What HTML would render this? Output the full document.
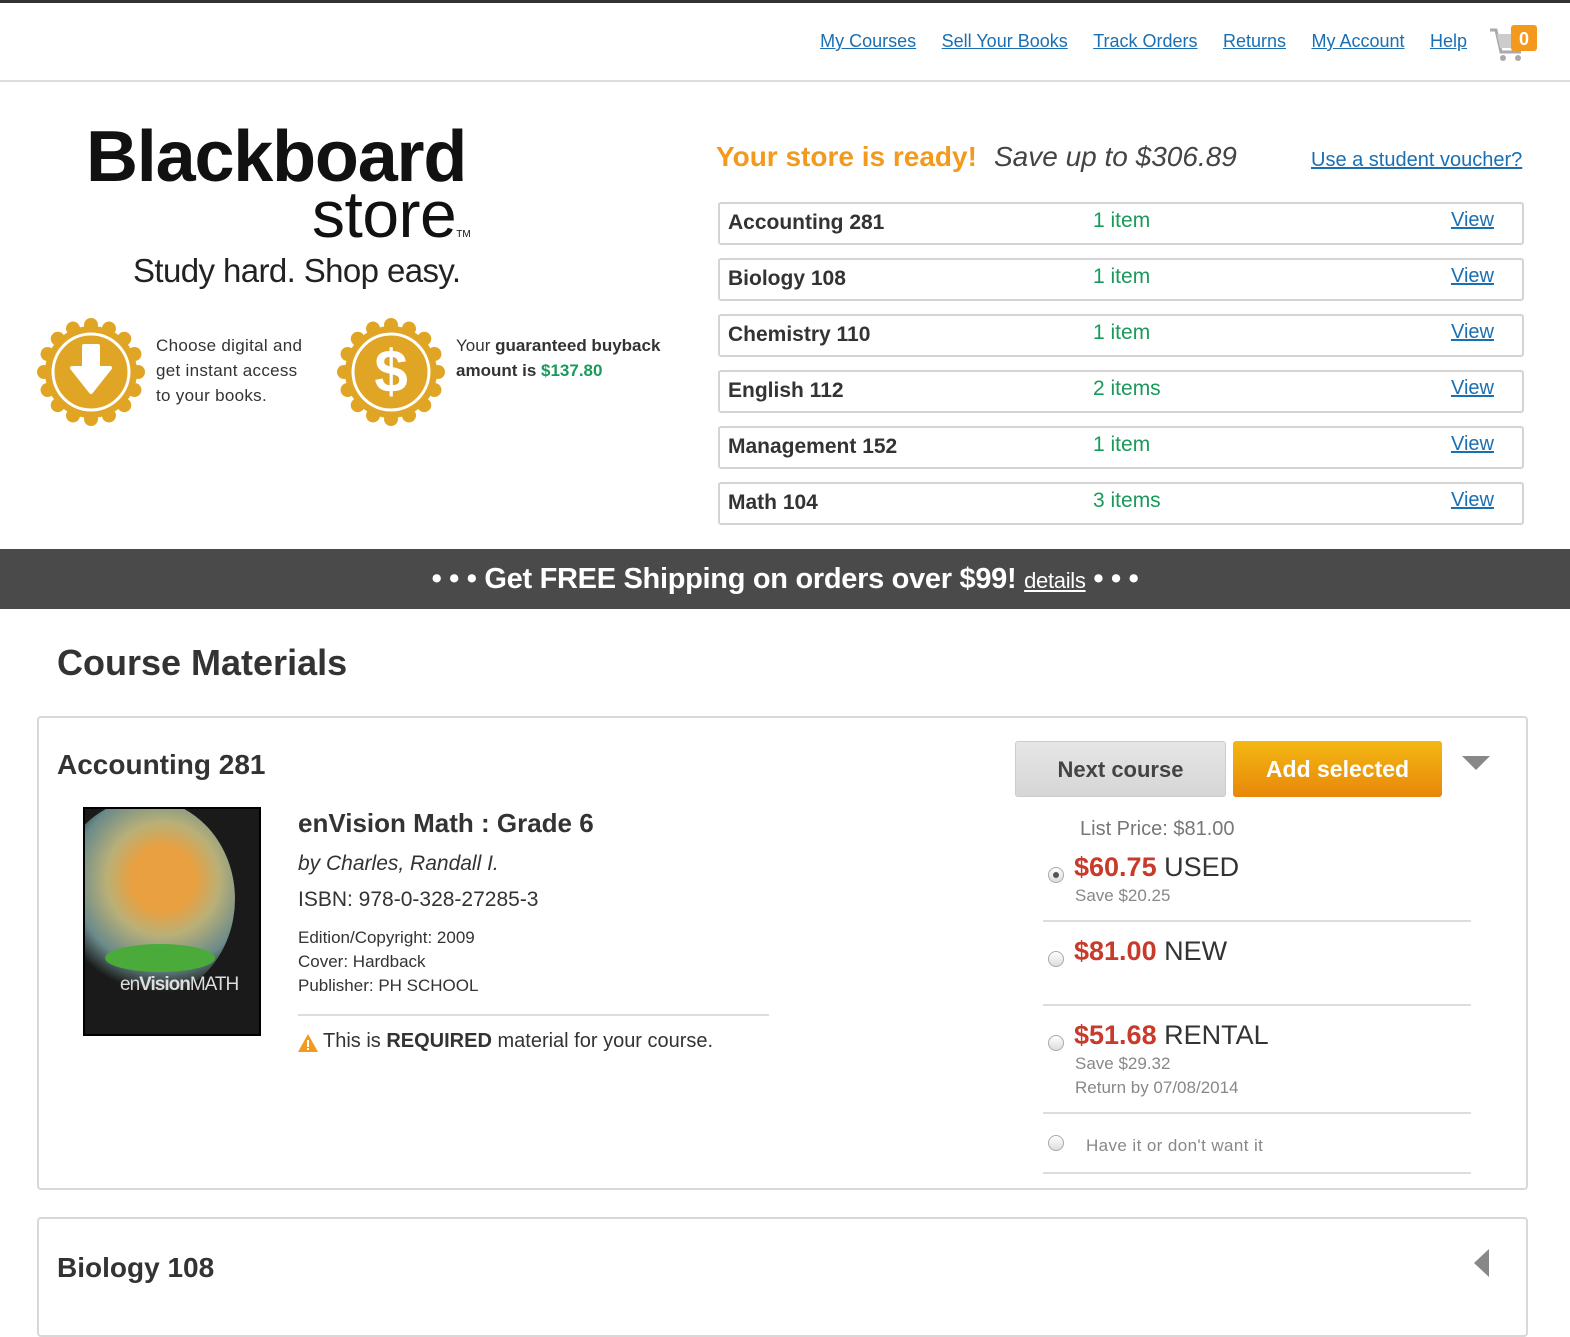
<!DOCTYPE html>
<html><head><meta charset="utf-8"><style>
*{margin:0;padding:0;box-sizing:border-box}
body{width:1570px;height:1304px;overflow:hidden;background:#fff;font-family:"Liberation Sans",Arial,sans-serif;color:#333;position:relative}
.a{position:absolute}
a{color:#1a6fb3;text-decoration:underline}
.nav a{font-size:18px;margin-left:21px}
.row{position:absolute;left:718px;width:806px;height:43px;border:2px solid #d4d4d4;border-radius:3px}
.row .n{position:absolute;left:8px;top:7px;font-size:21px;font-weight:bold;color:#333}
.row .c{position:absolute;left:373px;top:5px;font-size:21px;color:#1a9a5a}
.row a{position:absolute;left:731px;top:5px;font-size:20px}
.box{position:absolute;left:37px;width:1491px;border:2px solid #d8d8d8;border-radius:4px}
.hr{position:absolute;left:1043px;width:428px;height:2px;background:#ddd}
.rad{position:absolute;left:1048px;width:16px;height:16px;border-radius:50%;border:1px solid #aaa;background:linear-gradient(#fff,#ddd)}
.pr{position:absolute;left:1074px;font-size:27px;color:#333}
.pr b{color:#c83a2a}
.sv{position:absolute;left:1075px;font-size:17px;color:#888}
</style></head><body>
<div class="a" style="left:0;top:0;width:1570px;height:3px;background:#333"></div>
<div class="a" style="left:0;top:80px;width:1570px;height:2px;background:#ddd"></div>
<div class="a nav" style="right:103px;top:31px;white-space:nowrap"><a>My Courses</a> <a>Sell Your Books</a> <a>Track Orders</a> <a>Returns</a> <a>My Account</a> <a>Help</a></div>
<svg class="a" style="left:1488px;top:24px" width="52" height="40" viewBox="0 0 52 40"><path d="M2 6h6l5 22h20" fill="none" stroke="#aaa" stroke-width="3"/><path d="M9 10h28l-4 14H12z" fill="#ccc"/><circle cx="15" cy="34" r="3" fill="#aaa"/><circle cx="30" cy="34" r="3" fill="#aaa"/><rect x="23" y="1" width="26" height="26" rx="3" fill="#f39a1e"/><text x="36" y="21" font-family="Liberation Sans" font-weight="bold" font-size="18" fill="#fff" text-anchor="middle">0</text></svg>

<div class="a" style="left:86px;top:116px;font-size:72px;font-weight:bold;color:#111;letter-spacing:-1.2px">Blackboard</div>
<div class="a" style="left:312px;top:176px;font-size:66px;color:#111;letter-spacing:-0.5px">store<span style="font-size:10px;letter-spacing:0">TM</span></div>
<div class="a" style="left:133px;top:252px;font-size:33px;color:#222;letter-spacing:-0.6px">Study hard. Shop easy.</div>

<svg class="a" style="left:37px;top:318px" width="108" height="108" viewBox="-54 -54 108 108"><g fill="#e0a524"><circle r="46"/>
<g id="s"><circle cx="0" cy="-47" r="7"/><circle cx="0" cy="47" r="7"/><circle cx="-47" cy="0" r="7"/><circle cx="47" cy="0" r="7"/></g>
<use href="#s" transform="rotate(22.5)"/><use href="#s" transform="rotate(45)"/><use href="#s" transform="rotate(67.5)"/></g>
<circle r="38" fill="none" stroke="#fff" stroke-width="3"/><path d="M-7 -26h14v22h12l-19 24-19-24h12z" fill="#fff" stroke="#fff" stroke-width="4" stroke-linejoin="round"/></svg>
<div class="a" style="left:156px;top:333px;font-size:17px;line-height:25px;color:#333;letter-spacing:0.3px">Choose digital and<br>get instant access<br>to your books.</div>
<svg class="a" style="left:337px;top:318px" width="108" height="108" viewBox="-54 -54 108 108"><g fill="#e0a524"><circle r="46"/>
<g id="s2"><circle cx="0" cy="-47" r="7"/><circle cx="0" cy="47" r="7"/><circle cx="-47" cy="0" r="7"/><circle cx="47" cy="0" r="7"/></g>
<use href="#s2" transform="rotate(22.5)"/><use href="#s2" transform="rotate(45)"/><use href="#s2" transform="rotate(67.5)"/></g>
<circle r="38" fill="none" stroke="#fff" stroke-width="3"/><text x="0" y="20" text-anchor="middle" font-family="Liberation Sans" font-weight="bold" font-size="60" fill="#fff">$</text></svg>
<div class="a" style="left:456px;top:333px;font-size:17px;line-height:25px;color:#333">Your <b>guaranteed buyback</b><br><b>amount is <span style="color:#1a9a5a">$137.80</span></b></div>

<div class="a" style="left:716px;top:141px;font-size:28px;font-weight:bold;color:#f39a1e">Your store is ready!</div>
<div class="a" style="left:994px;top:141px;font-size:28px;font-style:italic;color:#444">Save up to $306.89</div>
<a class="a" style="left:1311px;top:149px;font-size:20px">Use a student voucher?</a>

<div class="row" style="top:202px"><span class="n">Accounting 281</span><span class="c">1 item</span><a>View</a></div>
<div class="row" style="top:258px"><span class="n">Biology 108</span><span class="c">1 item</span><a>View</a></div>
<div class="row" style="top:314px"><span class="n">Chemistry 110</span><span class="c">1 item</span><a>View</a></div>
<div class="row" style="top:370px"><span class="n">English 112</span><span class="c">2 items</span><a>View</a></div>
<div class="row" style="top:426px"><span class="n">Management 152</span><span class="c">1 item</span><a>View</a></div>
<div class="row" style="top:482px"><span class="n">Math 104</span><span class="c">3 items</span><a>View</a></div>

<div class="a" style="left:0;top:549px;width:1570px;height:60px;background:#4a4a4a;color:#fff;text-align:center;font-size:29px;font-weight:bold;line-height:60px;letter-spacing:-0.3px">• • • Get FREE Shipping on orders over $99! <span style="font-size:22px;text-decoration:underline;font-weight:normal">details</span> • • •</div>

<div class="a" style="left:57px;top:642px;font-size:36px;font-weight:bold;color:#333">Course Materials</div>

<div class="box" style="top:716px;height:474px"></div>
<div class="a" style="left:57px;top:749px;font-size:28px;font-weight:bold;color:#333">Accounting 281</div>
<div class="a" style="left:1015px;top:741px;width:211px;height:56px;background:linear-gradient(#e6e6e6,#d6d6d6);border:1px solid #ccc;border-radius:3px;font-size:22px;font-weight:bold;color:#444;text-align:center;line-height:56px">Next course</div>
<div class="a" style="left:1233px;top:741px;width:209px;height:56px;background:linear-gradient(#f3b812,#e8870a);border-radius:3px;font-size:23px;font-weight:bold;color:#fff;text-align:center;line-height:56px">Add selected</div>
<div class="a" style="left:1462px;top:756px;width:0;height:0;border-left:14px solid transparent;border-right:14px solid transparent;border-top:14px solid #888"></div>

<div class="a" style="left:83px;top:807px;width:178px;height:229px;background:#1a1a1a;border:2px solid #000;overflow:hidden">
<div class="a" style="left:-30px;top:-10px;width:180px;height:200px;border-radius:50%;background:radial-gradient(circle at 60% 40%,#e8a040 0 20%,#b9b078 35%,#6a8a8a 55%,transparent 70%)"></div>
<div class="a" style="left:20px;top:135px;width:110px;height:28px;border-radius:50%;background:#4aaa3a"></div>
<div class="a" style="left:35px;top:165px;font-size:19px;color:#ddd;letter-spacing:-1px">en<b>Vision</b>MATH</div></div>

<div class="a" style="left:298px;top:808px;font-size:26px;font-weight:bold;color:#333">enVision Math : Grade 6</div>
<div class="a" style="left:298px;top:852px;font-size:21px;font-style:italic;color:#333">by Charles, Randall I.</div>
<div class="a" style="left:298px;top:888px;font-size:21px;color:#333">ISBN: 978-0-328-27285-3</div>
<div class="a" style="left:298px;top:926px;font-size:17px;line-height:24px;color:#333">Edition/Copyright: 2009<br>Cover: Hardback<br>Publisher: PH SCHOOL</div>
<div class="a" style="left:298px;top:1014px;width:471px;height:2px;background:#ddd"></div>
<svg class="a" style="left:297px;top:1033px" width="22" height="20"><path d="M11 1L21 19H1z" fill="#f39a1e"/><rect x="10" y="7" width="2" height="7" fill="#fff"/><rect x="10" y="15" width="2" height="2" fill="#fff"/></svg>
<div class="a" style="left:323px;top:1030px;font-size:20px;color:#333">This is <b>REQUIRED</b> material for your course.</div>

<div class="a" style="left:1080px;top:818px;font-size:20px;color:#777">List Price: $81.00</div>
<div class="rad" style="top:867px"><div class="a" style="left:4px;top:4px;width:6px;height:6px;border-radius:50%;background:#555"></div></div>
<div class="pr" style="top:852px"><b>$60.75</b> USED</div>
<div class="sv" style="top:886px">Save $20.25</div>
<div class="hr" style="top:920px"></div>
<div class="rad" style="top:951px"></div>
<div class="pr" style="top:936px"><b>$81.00</b> NEW</div>
<div class="hr" style="top:1004px"></div>
<div class="rad" style="top:1035px"></div>
<div class="pr" style="top:1020px"><b>$51.68</b> RENTAL</div>
<div class="sv" style="top:1054px">Save $29.32</div>
<div class="sv" style="top:1078px">Return by 07/08/2014</div>
<div class="hr" style="top:1112px"></div>
<div class="rad" style="top:1135px"></div>
<div class="sv" style="left:1086px;top:1136px;letter-spacing:0.4px">Have it or don't want it</div>
<div class="hr" style="top:1172px"></div>

<div class="box" style="top:1217px;height:120px"></div>
<div class="a" style="left:57px;top:1252px;font-size:28px;font-weight:bold;color:#333">Biology 108</div>
<div class="a" style="left:1474px;top:1249px;width:0;height:0;border-top:14px solid transparent;border-bottom:14px solid transparent;border-right:15px solid #888"></div>
</body></html>
